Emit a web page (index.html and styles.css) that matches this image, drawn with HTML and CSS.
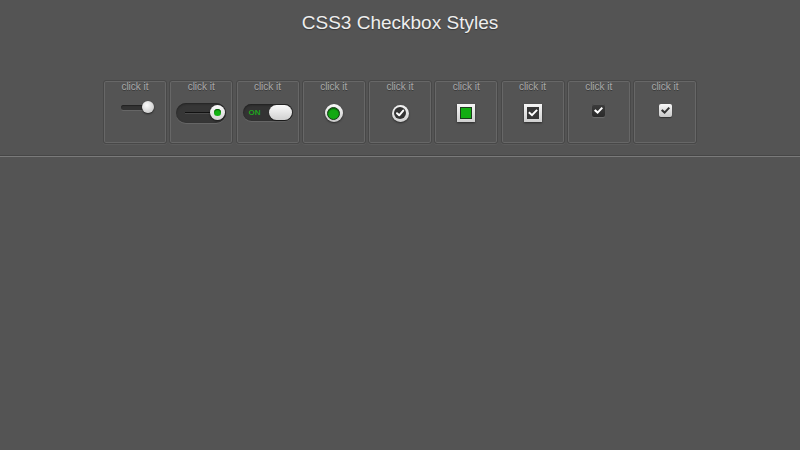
FILE: index.html
```
<!DOCTYPE html>
<html>
<head>
<meta charset="utf-8">
<link rel="stylesheet" href="styles.css">
</head>
<body>
<header class="top">
  <h1 class="title">CSS3 Checkbox Styles</h1>
  <div class="row">
    <section class="box">
      <span class="label">click it</span>
      <div class="ctl">
        <div class="slider1"><span class="knob1"></span></div>
      </div>
    </section>
    <section class="box">
      <span class="label">click it</span>
      <div class="ctl">
        <div class="slider2"><span class="line2"></span><span class="knob2"><span class="dot2"></span></span></div>
      </div>
    </section>
    <section class="box">
      <span class="label">click it</span>
      <div class="ctl">
        <div class="toggle"><span class="on">ON</span><span class="knob3"></span></div>
      </div>
    </section>
    <section class="box">
      <span class="label">click it</span>
      <div class="ctl">
        <div class="radio"><span class="radio-dot"></span></div>
      </div>
    </section>
    <section class="box">
      <span class="label">click it</span>
      <div class="ctl">
        <div class="circ"><span class="circ-in"><svg viewBox="0 0 12 12" width="12" height="12"><path d="M3 6.2 L5.2 8.3 L9.2 3.6" fill="none" stroke="#fff" stroke-width="2" stroke-linecap="round" stroke-linejoin="round"/></svg></span></div>
      </div>
    </section>
    <section class="box">
      <span class="label">click it</span>
      <div class="ctl">
        <div class="sq"><span class="sq-in"></span></div>
      </div>
    </section>
    <section class="box">
      <span class="label">click it</span>
      <div class="ctl">
        <div class="sqc"><span class="sqc-in"><svg viewBox="0 0 12 12" width="12" height="12"><path d="M2.6 6 L5 8.2 L9.4 3.6" fill="none" stroke="#fff" stroke-width="2" stroke-linecap="square"/></svg></span></div>
      </div>
    </section>
    <section class="box">
      <span class="label">click it</span>
      <div class="ctl up">
        <div class="sm-dark"><svg viewBox="0 0 13 13" width="13" height="13"><path d="M3.4 6.6 L5.6 8.6 L9.6 4.4" fill="none" stroke="#fff" stroke-width="2" stroke-linecap="square"/></svg></div>
      </div>
    </section>
    <section class="box">
      <span class="label">click it</span>
      <div class="ctl up">
        <div class="sm-light"><svg viewBox="0 0 13 13" width="13" height="13"><path d="M3.4 6.6 L5.6 8.6 L9.6 4.4" fill="none" stroke="#333" stroke-width="2" stroke-linecap="square"/></svg></div>
      </div>
    </section>
  </div>
</header>
</body>
</html>
```
FILE: styles.css
```
html, body {
  margin: 0;
  padding: 0;
  background: #545454;
  font-family: "Liberation Sans", Arial, sans-serif;
  height: 100%;
}

.top {
  padding: 12px 0 12px;
  border-bottom: 1px solid #7a7a7a;
  box-shadow: 0 -1px 0 #464646 inset;
}

.title {
  margin: 0;
  font-size: 19px;
  line-height: 22px;
  font-weight: normal;
  color: #eeeeee;
  text-align: center;
  text-shadow: 0 1px 1px rgba(0,0,0,0.35);
}

.row {
  margin-top: 46px;
  display: flex;
  justify-content: center;
  gap: 2.25px;
}

.box {
  box-sizing: border-box;
  width: 64px;
  height: 64px;
  border: 1px solid #484848;
  border-radius: 3px;
  box-shadow: inset 0 0 0 1px #676767, 0 1px 0 #5c5c5c;
  display: flex;
  flex-direction: column;
  align-items: center;
}

.label {
  margin-top: 0;
  font-size: 10px;
  line-height: 12px;
  color: #aaaaaa;
  text-shadow: 0 1px 0 rgba(0,0,0,0.35);
}

.ctl {
  flex: 1;
  width: 100%;
  display: flex;
  align-items: center;
  justify-content: center;
  padding-bottom: 10px;
}

.ctl.up { padding-bottom: 15px; }

/* 1 */
.slider1 {
  position: relative;
  width: 30px;
  height: 5px;
  margin-top: -12px;
  margin-left: 2px;
  border-radius: 3px;
  background: #333;
  box-shadow: inset 0 1px 1px #222, 0 1px 0 #666;
}
.knob1 {
  position: absolute;
  right: -3px;
  top: -4px;
  width: 12px;
  height: 12px;
  border-radius: 50%;
  background: radial-gradient(circle at 40% 35%, #fafafa, #cfcfcf 70%, #a8a8a8);
  box-shadow: 0 1px 2px rgba(0,0,0,0.6);
}

/* 2 */
.slider2 {
  position: relative;
  width: 50px;
  height: 20px;
  border-radius: 10px;
  background: #363636;
  box-shadow: inset 0 1px 2px #222, 0 1px 0 #666;
}
.line2 {
  position: absolute;
  left: 9px;
  top: 9px;
  width: 30px;
  height: 1px;
  background: #111;
  box-shadow: 0 1px 0 #4a4a4a;
}
.knob2 {
  position: absolute;
  right: 1px;
  top: 2px;
  width: 15px;
  height: 15px;
  border-radius: 50%;
  background: linear-gradient(#fcfcfc, #d4d4d4);
  box-shadow: 0 1px 2px rgba(0,0,0,0.6);
  display: flex;
  align-items: center;
  justify-content: center;
}
.dot2 {
  width: 7px;
  height: 7px;
  border-radius: 50%;
  background: #12b312;
  box-shadow: inset 0 1px 1px #074d07;
}

/* 3 */
.toggle {
  position: relative;
  width: 50px;
  height: 17px;
  border-radius: 9px;
  background: #333;
  box-shadow: inset 0 1px 2px #1e1e1e, 0 1px 0 #666;
  margin-top: -2px;
}
.on {
  position: absolute;
  left: 6px;
  top: 4px;
  font-size: 8px;
  line-height: 9px;
  font-weight: bold;
  color: #1fa51f;
}
.knob3 {
  position: absolute;
  right: 1px;
  top: 1px;
  width: 23px;
  height: 15px;
  border-radius: 8px;
  background: linear-gradient(#fafafa, #d0d0d0);
  box-shadow: 0 1px 1px rgba(0,0,0,0.5);
}

/* 4 */
.radio {
  width: 18px;
  height: 18px;
  border-radius: 50%;
  background: linear-gradient(#fbfbfb, #c9c9c9);
  box-shadow: 0 1px 2px rgba(0,0,0,0.5);
  display: flex;
  align-items: center;
  justify-content: center;
}
.radio-dot {
  width: 11px;
  height: 11px;
  border-radius: 50%;
  background: #14a914;
  border: 1px solid #1a3a1a;
  box-shadow: inset 0 1px 1px #0a5a0a;
}

/* 5 */
.circ {
  width: 17px;
  height: 17px;
  border-radius: 50%;
  background: linear-gradient(#f4f4f4, #cfcfcf);
  box-shadow: 0 1px 2px rgba(0,0,0,0.5);
  display: flex;
  align-items: center;
  justify-content: center;
}
.circ-in {
  width: 12px;
  height: 12px;
  border-radius: 50%;
  background: #333;
  display: flex;
}

/* 6 */
.sq {
  box-sizing: border-box;
  width: 18px;
  height: 18px;
  background: linear-gradient(#f6f6f6, #cfcfcf);
  box-shadow: 0 1px 2px rgba(0,0,0,0.5);
  display: flex;
  align-items: center;
  justify-content: center;
}
.sq-in {
  width: 10px;
  height: 10px;
  background: #12ad12;
  border: 1px solid #1d3a1d;
}

/* 7 */
.sqc {
  width: 18px;
  height: 18px;
  background: linear-gradient(#f6f6f6, #cfcfcf);
  box-shadow: 0 1px 2px rgba(0,0,0,0.5);
  display: flex;
  align-items: center;
  justify-content: center;
}
.sqc-in {
  width: 12px;
  height: 12px;
  background: #363636;
  display: flex;
}

/* 8 */
.sm-dark {
  width: 13px;
  height: 13px;
  border-radius: 2px;
  background: linear-gradient(#3c3c3c, #2a2a2a);
  box-shadow: 0 1px 1px rgba(255,255,255,0.15), inset 0 1px 0 #555;
  display: flex;
}

/* 9 */
.sm-light {
  width: 13px;
  height: 13px;
  border-radius: 2px;
  background: linear-gradient(#f8f8f8, #c8c8c8);
  box-shadow: 0 1px 1px rgba(0,0,0,0.4);
  display: flex;
}
```
